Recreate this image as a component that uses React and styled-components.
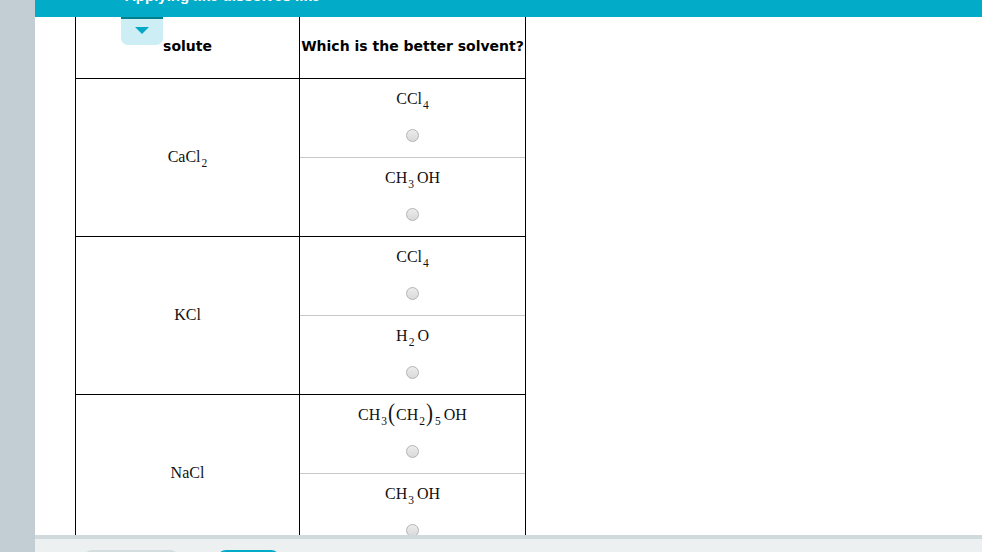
import React from "react";
import styled, { createGlobalStyle } from "styled-components";

const GlobalStyle = createGlobalStyle`
    html, body {
        margin: 0;
        padding: 0;
        background: #fff;
        overflow: hidden;
    }
`

const Page = styled.div`
    display: flex;
    height: 100vh;
    width: 100vw;
`

const Sidebar = styled.div`
    width: 35px;
    flex-shrink: 0;
    background-color: #c2ced4;
`

const Main = styled.div`
    flex: 1;
    display: flex;
    flex-direction: column;
    min-width: 0;
`

const TopBar = styled.div`
    height: 17px;
    flex-shrink: 0;
    background-color: #02abc8;
    overflow: hidden;
    padding-left: 90px;
`

const Title = styled.h1`
    margin: -13px 0 0 0;
    font-family: "Liberation Sans", Arial, sans-serif;
    font-weight: bold;
    font-size: 15px;
    line-height: 18px;
    color: #fff;
    white-space: nowrap;
`

const Content = styled.div`
    flex: 1;
    position: relative;
    overflow: hidden;
    padding-left: 40px;
`

const ToggleTab = styled.button`
    position: absolute;
    top: 0;
    left: 86px;
    width: 42px;
    height: 28px;
    box-sizing: border-box;
    padding: 0;
    border: none;
    border-top: 2px solid #00808f;
    border-radius: 0 0 7px 7px;
    background-color: #cdeef4;
    display: flex;
    justify-content: center;
    padding-top: 8px;
    z-index: 2;
`

const Caret = styled.span`
    width: 0;
    height: 0;
    border-left: 7px solid transparent;
    border-right: 7px solid transparent;
    border-top: 7px solid #02a8c6;
`

const Grid = styled.div`
    width: 451px;
    font-family: "Liberation Serif", "Times New Roman", serif;
    color: #111;
`

const HeaderRow = styled.div`
    display: grid;
    grid-template-columns: 225px 226px;
    height: 62px;
    box-sizing: border-box;
    border-bottom: 1px solid #000;
`

const HeaderCell = styled.div`
    box-sizing: border-box;
    border-right: 1px solid #000;
    border-left: ${props => props.$first ? '1px solid #000' : 'none'};
    display: flex;
    align-items: center;
    justify-content: center;
    padding-bottom: 3px;
    font-family: "DejaVu Sans", Verdana, sans-serif;
    font-weight: bold;
    font-size: 14px;
    line-height: 16px;
    white-space: nowrap;
    color: #000;
`

const Row = styled.div`
    display: grid;
    grid-template-columns: 225px 226px;
    border-bottom: 1px solid #000;
`

const SoluteCell = styled.div`
    box-sizing: border-box;
    border-left: 1px solid #000;
    border-right: 1px solid #000;
    display: flex;
    align-items: center;
    justify-content: center;
    padding-bottom: 2px;
`

const SolventColumn = styled.div`
    box-sizing: border-box;
    border-right: 1px solid #000;
    display: flex;
    flex-direction: column;
`

const Option = styled.label`
    height: ${props => props.$divider ? 79 : 78}px;
    box-sizing: border-box;
    display: flex;
    flex-direction: column;
    align-items: center;
    padding-top: 10px;
    border-bottom: ${props => props.$divider ? '1px solid #c8c8c8' : 'none'};
`

const Formula = styled.span`
    font-size: 16px;
    line-height: 20px;
    white-space: nowrap;
    height: 20px;
    display: inline-block;
`

const Sub = styled.sub`
    font-size: 11.5px;
    line-height: 0;
    vertical-align: -5px;
    margin: 0 ${props => props.$wide ? '3px' : '0'} 0 1px;
`

const Paren = styled.span`
    font-size: 21px;
    line-height: 0;
    display: inline-block;
    transform: scaleY(1.15);
    margin: 0 1px;
`

const Radio = styled.input.attrs({ type: 'radio' })`
    appearance: none;
    margin: 20px 0 0 0;
    width: 13px;
    height: 13px;
    border-radius: 50%;
    border: 1px solid #b4b4b4;
    background: linear-gradient(#ececec, #d9d9d9);
    box-sizing: border-box;
`

const Footer = styled.div`
    height: 17px;
    flex-shrink: 0;
    box-sizing: border-box;
    border-top: 4px solid #d0dadd;
    background-color: #ecf0f1;
    display: flex;
    gap: 38px;
    padding: 11px 0 0 48px;
    overflow: hidden;
`

const FooterButton = styled.div`
    width: ${props => props.$width}px;
    height: 30px;
    border-radius: 9px;
    background-color: ${props => props.$primary ? '#02abc8' : '#d3dcdf'};
`

const rows = [
    {
        solute: <>CaCl<Sub>2</Sub></>,
        options: [
            <>CCl<Sub>4</Sub></>,
            <>CH<Sub $wide>3</Sub>OH</>
        ]
    },
    {
        solute: <>KCl</>,
        options: [
            <>CCl<Sub>4</Sub></>,
            <>H<Sub $wide>2</Sub>O</>
        ]
    },
    {
        solute: <>NaCl</>,
        options: [
            <>CH<Sub>3</Sub><Paren>(</Paren>CH<Sub>2</Sub><Paren>)</Paren><Sub $wide>5</Sub>OH</>,
            <>CH<Sub $wide>3</Sub>OH</>
        ]
    }
]

const App = () => {
    return (
        <Page>
            <GlobalStyle />
            <Sidebar />
            <Main>
                <TopBar>
                    <Title>Applying like dissolves like</Title>
                </TopBar>
                <Content>
                    <ToggleTab aria-label="toggle">
                        <Caret />
                    </ToggleTab>
                    <Grid>
                        <HeaderRow>
                            <HeaderCell $first>solute</HeaderCell>
                            <HeaderCell>Which is the better solvent?</HeaderCell>
                        </HeaderRow>
                        {rows.map((row, i) => (
                            <Row key={i}>
                                <SoluteCell>
                                    <Formula>{row.solute}</Formula>
                                </SoluteCell>
                                <SolventColumn>
                                    {row.options.map((opt, j) => (
                                        <Option key={j} $divider={j === 0}>
                                            <Formula>{opt}</Formula>
                                            <Radio name={`q${i}`} />
                                        </Option>
                                    ))}
                                </SolventColumn>
                            </Row>
                        ))}
                    </Grid>
                </Content>
                <Footer>
                    <FooterButton $width={96} />
                    <FooterButton $width={63} $primary />
                </Footer>
            </Main>
        </Page>
    )
}

export default App
